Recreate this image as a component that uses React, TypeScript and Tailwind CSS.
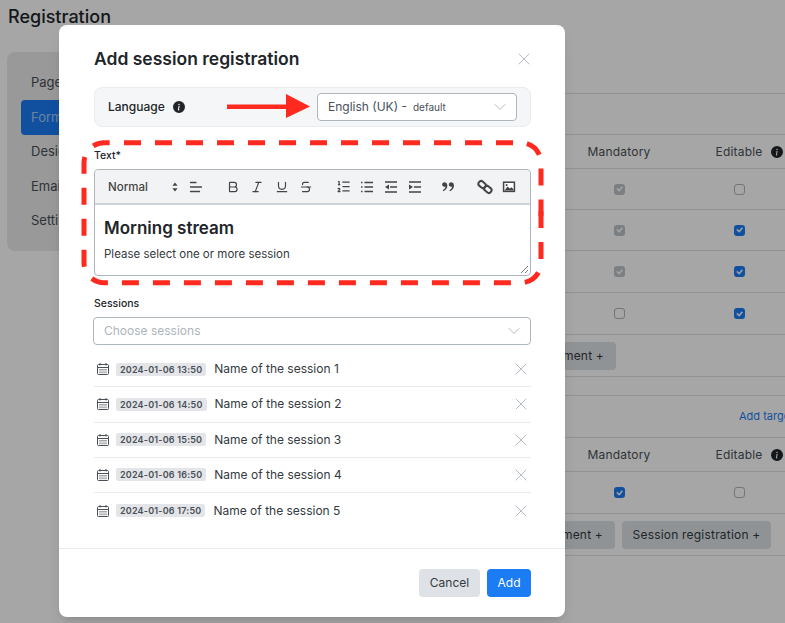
import { Bold, ChevronDown, Italic, ListOrdered, Strikethrough, Underline, X } from 'lucide-react'
import { BsCheck, BsInfoCircleFill } from 'react-icons/bs'
import { RiDoubleQuotesR } from 'react-icons/ri'

const sessions = [
  { date: '2024-01-06 13:50', name: 'Name of the session 1' },
  { date: '2024-01-06 14:50', name: 'Name of the session 2' },
  { date: '2024-01-06 15:50', name: 'Name of the session 3' },
  { date: '2024-01-06 16:50', name: 'Name of the session 4' },
  { date: '2024-01-06 17:50', name: 'Name of the session 5' },
]

function Check({ on, tone }: { on: boolean; tone: 'blue' | 'gray' }) {
  if (!on) return <span className="block size-[11px] rounded-[3px] border-[1.5px] border-[#adb5bd] bg-transparent" />
  return (
    <span className={`flex size-[11px] items-center justify-center rounded-[3px] text-white ${tone === 'blue' ? 'bg-[#1b7cf4]' : 'bg-[#bfc3c8]'}`}>
      <BsCheck size={12} strokeWidth={1} />
    </span>
  )
}

function HeadRow() {
  return (
    <div className="flex items-center justify-end border-b border-[#dee2e6] text-[12px] tracking-[0.2px] text-[#495057]">
      <div className="w-[120px] text-center">Mandatory</div>
      <div className="flex w-[120px] items-center justify-center gap-[8px] pl-[20px]">
        Editable <BsInfoCircleFill size={12} className="shrink-0 text-[#212529]" />
      </div>
    </div>
  )
}

function Row({ a, b, tone, h }: { a: boolean; b: boolean; tone: 'blue' | 'gray'; h: string }) {
  return (
    <div className={`flex items-center justify-end border-b border-[#dee2e6] ${h}`}>
      <div className="flex w-[120px] justify-center"><Check on={a} tone={tone} /></div>
      <div className="flex w-[120px] justify-center"><Check on={b} tone="blue" /></div>
    </div>
  )
}

function PageBehind() {
  return (
    <div className="h-[623px] w-[785px] overflow-hidden bg-white font-['Inter',sans-serif] text-[#212529]">
      <h1 className="pl-[8px] pt-[6px] text-[18px] leading-[22px] font-medium">Registration</h1>
      <div className="mt-[24px] flex">
        <div className="ml-[7px] h-[199px] w-[170px] shrink-0 rounded-lg bg-[#ebebeb] px-[14px] pt-[14px] text-[13px] text-[#495057]">
          <div className="flex h-[34px] items-center pl-[10px]">Page</div>
          <div className="flex h-[35px] items-center rounded bg-[#1b7cf4] pl-[10px] text-white/60">Form</div>
          <div className="flex h-[34px] items-center pl-[10px]">Design</div>
          <div className="flex h-[35px] items-center pl-[10px]">Email</div>
          <div className="flex h-[34px] items-center pl-[10px]">Settings</div>
        </div>
        <div className="ml-[8px] w-[614px] shrink-0">
          <div className="mt-[41px] h-[42px] border-y border-[#dee2e6]" />
          <div className="h-[34px] [&>div]:h-full"><HeadRow /></div>
          <Row a b={false} tone="gray" h="h-[41px]" />
          <Row a b tone="gray" h="h-[41px]" />
          <Row a b tone="gray" h="h-[42px]" />
          <Row a={false} b tone="gray" h="h-[42px]" />
          <div className="flex h-[42px] items-center justify-end border-b border-[#dee2e6] pr-[183px]">
            <span className="flex h-[28px] items-center rounded bg-[#dee2e6] px-[12px] text-[12px] tracking-[0.2px] text-[#343a40]">Add element +</span>
          </div>
          <div className="h-[19px] border-b border-[#dee2e6]" />
          <div className="flex h-[42px] items-center justify-end border-b border-[#dee2e6] text-[11px] text-[#1b7cf4]">
            <span className="w-[60px]">Add target</span>
          </div>
          <div className="h-[34px] [&>div]:h-full"><HeadRow /></div>
          <Row a b={false} tone="blue" h="h-[42px]" />
          <div className="flex h-[42px] items-center justify-end gap-[7px] border-b border-[#dee2e6] pr-[28px] text-[12px] tracking-[0.2px] text-[#343a40]">
            <span className="flex h-[28px] items-center rounded bg-[#dee2e6] px-[12px]">Add element +</span>
            <span className="flex h-[28px] w-[149px] items-center justify-center rounded bg-[#dee2e6]">Session registration +</span>
          </div>
        </div>
      </div>
    </div>
  )
}

function LinkIcon() {
  return (
    <svg width="16" height="16" viewBox="0 0 16 16" fill="none" stroke="#444" strokeWidth="2">
      <rect x="1.2" y="2.8" width="8" height="5.4" rx="2.7" transform="rotate(40 5 5.5)" />
      <rect x="6.8" y="7.8" width="8" height="5.4" rx="2.7" transform="rotate(40 11 10.5)" />
    </svg>
  )
}

function ImageIcon() {
  return (
    <svg width="16" height="16" viewBox="0 0 16 16" fill="none">
      <rect x="2.6" y="3.2" width="10.8" height="9.2" stroke="#444" strokeWidth="1.5" fill="#fff" />
      <path d="M3.5 11.5 L6.5 7.5 L8.8 9.6 L10.6 8.2 L12.5 10.5 V11.5 Z" fill="#444" />
      <circle cx="5.6" cy="6" r="1" fill="#444" />
    </svg>
  )
}

function SortIcon() {
  return (
    <svg width="14" height="14" viewBox="0 0 14 14" fill="#444">
      <path d="M7 2.5 L9.6 5.8 H4.4 Z" />
      <path d="M7 11.5 L9.6 8.2 H4.4 Z" />
    </svg>
  )
}

function AlignIcon() {
  return (
    <svg width="14" height="14" viewBox="0 0 14 14" stroke="#444" strokeWidth="1.3" strokeLinecap="round">
      <path d="M1.5 2.5 H7 M1.5 7 H12.5 M1.5 11.5 H10.5" />
    </svg>
  )
}

function BulletIcon() {
  return (
    <svg width="14" height="14" viewBox="0 0 14 14" stroke="#444" strokeWidth="1.3">
      <path d="M4.5 2.5 H13 M4.5 7 H13 M4.5 11.5 H13 M1 2.5 H2.5 M1 7 H2.5 M1 11.5 H2.5" />
    </svg>
  )
}

function IndentIcon({ out }: { out?: boolean }) {
  return (
    <svg width="14" height="14" viewBox="0 0 14 14" stroke="#444" strokeWidth="1.3">
      <path d="M1 2 H13 M1 12 H13 M6 7 H13" />
      <path d={out ? 'M1 7 L5 4.5 V9.5 Z' : 'M5 7 L1 4.5 V9.5 Z'} fill="#444" stroke="none" />
    </svg>
  )
}

function CalendarIcon() {
  return (
    <svg width="14" height="14" viewBox="0 0 14 14" fill="none" stroke="#495057" strokeWidth="1" className="shrink-0">
      <rect x="1.5" y="2.5" width="11" height="10" rx="1" />
      <path d="M1.5 5.5 H12.5 M4 1 V3.5 M10 1 V3.5" />
      <path d="M3.5 7.5 H10.5 M3.5 9 H10.5 M3.5 10.7 H10.5" strokeDasharray="1 1" />
    </svg>
  )
}

function Tool({ cls, children }: { cls: string; children: React.ReactNode }) {
  return <span className={`flex w-[16px] shrink-0 items-center justify-center text-[#444] ${cls}`}>{children}</span>
}

function Modal() {
  return (
    <div className="absolute left-[59px] top-[25px] h-[592px] w-[506px] rounded-lg bg-white font-['Inter',sans-serif] text-[#212529] shadow-lg">
      <div className="flex items-center justify-between pl-[35px] pr-[31px] pt-[23px]">
        <h2 className="text-[17.5px] leading-[22px] font-semibold">Add session registration</h2>
        <X size={20} strokeWidth={1.1} className="text-[#adb5bd]" />
      </div>
      <div className="ml-[35px] mr-[34px] mt-[17px] flex h-[40px] items-center justify-between rounded-lg border border-[#e9ecef] bg-[#f5f6f7] pl-[13px] pr-[13px]">
        <div className="flex items-center gap-[8px] text-[12px] font-medium">
          Language <BsInfoCircleFill size={12} />
        </div>
        <div className="flex h-[28px] w-[200px] items-center justify-between rounded border border-[#adb5bd] bg-white pl-[10px] pr-[6px]">
          <span className="text-[12px] text-[#495057]">English (UK) -<span className="ml-[6px] text-[10px]">default</span></span>
          <ChevronDown size={20} strokeWidth={1.1} className="text-[#adb5bd]" />
        </div>
      </div>
      <div className="ml-[35px] mr-[34px] mt-[22px] text-[10.5px] leading-[14px] font-medium">Text*</div>
      <div className="ml-[35px] mr-[34px] mt-[6px] h-[107px] rounded border border-[#adb5bd]">
        <div className="flex h-[35px] items-center rounded-t border-b-2 border-[#ced4da] bg-[#f2f3f5] pl-[13px]">
          <span className="mt-[3px] w-[60px] text-[11.5px] font-medium text-[#444]">Normal</span>
          <span className="flex w-[14px] justify-center"><SortIcon /></span>
          <Tool cls="ml-[6px]"><AlignIcon /></Tool>
          <Tool cls="ml-[21px]"><Bold size={14} strokeWidth={2} /></Tool>
          <Tool cls="ml-[8px]"><Italic size={14} /></Tool>
          <Tool cls="ml-[9px]"><Underline size={14} /></Tool>
          <Tool cls="ml-[8px]"><Strikethrough size={14} /></Tool>
          <Tool cls="ml-[21px]"><ListOrdered size={15} /></Tool>
          <Tool cls="ml-[8px]"><BulletIcon /></Tool>
          <Tool cls="ml-[8px]"><IndentIcon out /></Tool>
          <Tool cls="ml-[8px]"><IndentIcon /></Tool>
          <Tool cls="ml-[17px]"><RiDoubleQuotesR size={17} /></Tool>
          <Tool cls="ml-[21px]"><LinkIcon /></Tool>
          <Tool cls="ml-[8px]"><ImageIcon /></Tool>
        </div>
        <div className="relative h-[70px] pl-[9px] pt-[12px]">
          <div className="text-[17px] leading-[22px] font-semibold">Morning stream</div>
          <div className="mt-[7px] text-[11.5px] leading-[16px] text-[#343a40]">Please select one or more session</div>
          <svg width="9" height="9" viewBox="0 0 9 9" stroke="#555" strokeWidth="0.8" className="absolute bottom-[1px] right-[1px]">
            <path d="M1 8 L8 1 M5 8 L8 5" />
          </svg>
        </div>
      </div>
      <div className="ml-[35px] mr-[34px] mt-[21px] text-[10.5px] leading-[14px] font-medium">Sessions</div>
      <div className="ml-[34px] mr-[34px] mt-[6px] flex h-[28px] items-center justify-between rounded border border-[#adb5bd] pl-[10px] pr-[6px]">
        <span className="text-[12px] text-[#adb5bd]">Choose sessions</span>
        <ChevronDown size={20} strokeWidth={1.1} className="text-[#adb5bd]" />
      </div>
      <div className="ml-[35px] mr-[34px] mt-[7px]">
        {sessions.map((s, i) => (
          <div key={s.date} className={`flex h-[35.25px] items-center pl-[2px] pr-0 ${i < 4 ? 'border-b border-[#e9ecef]' : ''}`}>
            <CalendarIcon />
            <span className="ml-[6px] rounded-[2px] bg-[#e3e5e8] px-[4px] text-[9px] leading-[13px] font-semibold tracking-[0.2px] text-[#495057]">{s.date}</span>
            <span className="ml-[8px] text-[12px] text-[#343a40]">{s.name}</span>
            <X size={20} strokeWidth={1.1} className="ml-auto text-[#adb5bd]" />
          </div>
        ))}
      </div>
      <div className="mt-[20px] flex h-[69px] items-start justify-end gap-[7px] border-t border-[#e9ecef] pr-[34px] pt-[20px] text-[12px]">
        <span className="flex h-[28px] w-[61px] items-center justify-center rounded bg-[#dee2e6] text-[#343a40]">Cancel</span>
        <span className="flex h-[28px] w-[44px] items-center justify-center rounded bg-[#1b7cf4] text-white">Add</span>
      </div>
    </div>
  )
}

export default function App() {
  return (
    <div className="relative h-[623px] w-[785px] overflow-hidden">
      <PageBehind />
      <div className="absolute inset-0 bg-black/35" />
      <Modal />
      <svg width="785" height="623" fill="none" className="pointer-events-none absolute left-0 top-0">
        <path d="M124 142.7 H521 A20 20 0 0 1 541 162.7 V216" stroke="#ff2a1f" strokeWidth="5" strokeDasharray="17 14" />
        <path d="M541 211 V262.7 A20 20 0 0 1 521 282.7 H104 A20 20 0 0 1 84 262.7 V162.7 A20 20 0 0 1 104 142.7 H110" stroke="#ff2a1f" strokeWidth="5" strokeDasharray="17 14" />
        <path d="M227 104.5 H286 V94 L310 106.5 L286 118 V109 H227 Z" fill="#ff2a1f" />
      </svg>
    </div>
  )
}
